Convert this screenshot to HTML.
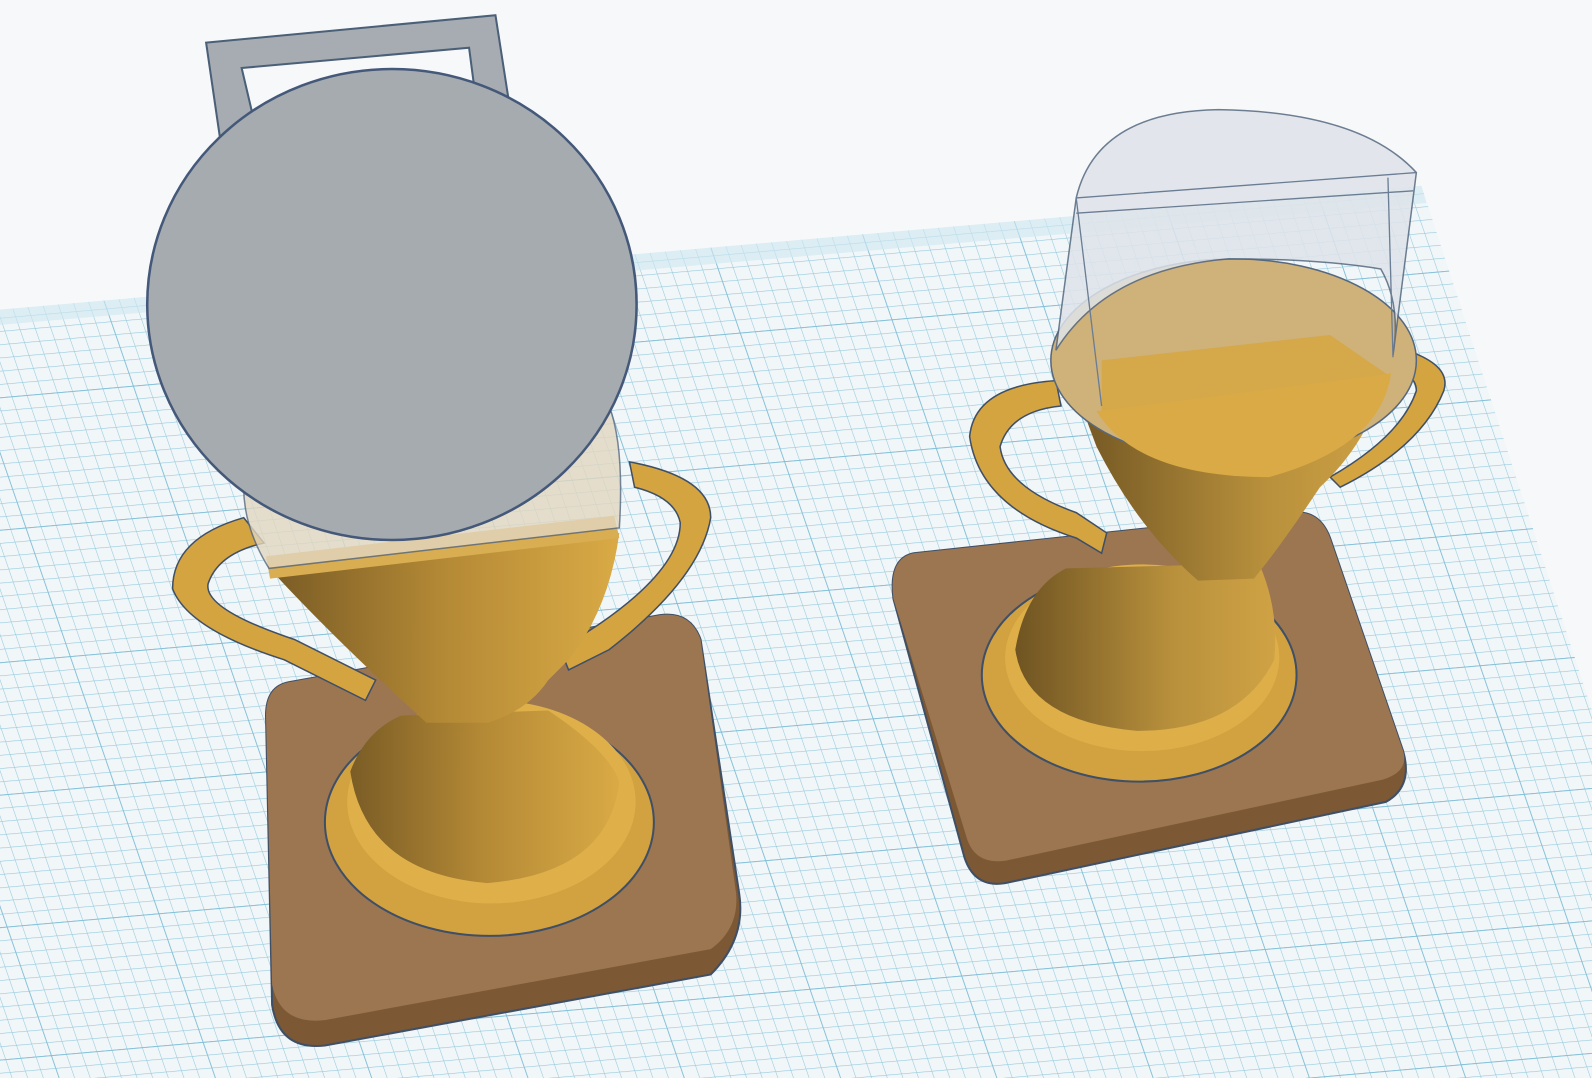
<!DOCTYPE html>
<html><head><style>html,body{margin:0;padding:0;background:#f7f8f9;overflow:hidden}svg{display:block}</style></head>
<body>
<svg width="1592" height="1078" viewBox="0 0 1568 1062" preserveAspectRatio="none" xmlns="http://www.w3.org/2000/svg">
<defs>
<pattern id="g" width="15" height="13" patternUnits="userSpaceOnUse" patternTransform="rotate(-5) skewX(14)">
<rect width="15" height="13" fill="#f1f6f8"/>
<path d="M0 0H15M0 0V13" stroke="#93c9de" stroke-width="1.1"/>
</pattern>
<pattern id="G" width="150" height="130" patternUnits="userSpaceOnUse" patternTransform="rotate(-5) skewX(14)">
<path d="M0 0H150M0 0V130" stroke="#7dbcd6" stroke-width="1.6" fill="none"/>
</pattern>
<linearGradient id="cone" x1="0" x2="1"><stop offset="0" stop-color="#7a5c25"/><stop offset=".5" stop-color="#b58a36"/><stop offset="1" stop-color="#d9aa45"/></linearGradient>
<linearGradient id="cone2" x1="0" x2="1"><stop offset="0" stop-color="#6f5422"/><stop offset=".6" stop-color="#b8903c"/><stop offset="1" stop-color="#cfa244"/></linearGradient>
</defs>
<rect width="1568" height="1062" fill="#f7f8f9"/>
<polygon points="0,305 1400,183 1568,700 1568,1062 0,1062" fill="url(#g)"/>
<polygon points="0,305 1400,183 1568,700 1568,1062 0,1062" fill="url(#G)"/>
<polygon points="0,305 1400,183 1405,200 0,320" fill="#cfe7f1" opacity=".6"/>

<!-- left base -->
<path d="M285,672 L650,606 Q680,602 690,630 L728,880 Q735,925 700,960 L320,1030 Q275,1035 268,990 L262,705 Q262,676 285,672Z" fill="#7c5834" stroke="#3f4f66" stroke-width="2"/>
<path d="M285,672 L650,606 Q680,602 690,630 L725,880 Q728,915 700,935 L320,1005 Q276,1010 268,970 L262,705 Q262,676 285,672Z" fill="#9b7651"/>
<!-- left foot -->
<ellipse cx="482" cy="810" rx="162" ry="112" fill="#d2a241" stroke="#3f4f66" stroke-width="2"/>
<ellipse cx="484" cy="790" rx="142" ry="100" fill="#dfb04a"/>
<path d="M345,760 Q360,720 395,705 L540,700 Q600,740 610,770 Q600,860 480,870 Q360,860 345,760Z" fill="url(#cone)"/>
<!-- handles left -->
<path d="M240,510 Q170,530 170,580 Q185,620 280,650 L360,690 L370,670 L290,630 Q200,600 205,575 Q215,545 260,535Z" fill="#d4a440" stroke="#3f4f66" stroke-width="1.5"/>
<path d="M620,455 Q700,470 700,510 Q690,570 600,640 L560,660 L552,640 L590,615 Q670,560 670,515 Q665,490 625,480Z" fill="#d4a440" stroke="#3f4f66" stroke-width="1.5"/>
<!-- left cup cone -->
<path d="M270,565 L610,525 Q600,600 560,650 L540,670 Q520,700 480,712 L420,712 Q330,630 270,565Z" fill="url(#cone)"/>
<path d="M262,548 L605,508 L610,530 L266,570Z" fill="#d9ad52"/>
<path d="M240,480 Q250,420 360,400 L600,400 Q615,440 610,520 L265,560 Q240,520 240,480Z" fill="#e2d7c0" opacity=".8" stroke="#55687f" stroke-width="1.5"/>
<!-- hanger -->
<path d="M203,42 L488,15 L502,105 L470,108 L462,47 L238,67 L250,118 L218,145Z" fill="#a6acb1" stroke="#4a5f78" stroke-width="2"/>
<!-- disc -->
<ellipse cx="386" cy="300" rx="241" ry="232" fill="#a6abb0" stroke="#44587a" stroke-width="2.5"/>

<!-- right base -->
<path d="M900,545 L1275,505 Q1300,503 1310,530 L1382,740 Q1392,775 1365,790 L990,870 Q960,875 950,845 L880,590 Q875,550 900,545Z" fill="#7c5834" stroke="#3f4f66" stroke-width="2"/>
<path d="M900,545 L1275,505 Q1300,503 1310,530 L1382,740 Q1388,760 1362,768 L990,848 Q960,852 952,825 L880,590 Q875,550 900,545Z" fill="#9b7651"/>
<ellipse cx="1122" cy="665" rx="155" ry="105" fill="#d2a241" stroke="#3f4f66" stroke-width="2"/>
<ellipse cx="1125" cy="648" rx="135" ry="92" fill="#deaf48"/>
<path d="M1000,640 Q1010,580 1050,560 L1240,555 Q1260,600 1255,650 Q1220,720 1120,720 Q1010,710 1000,640Z" fill="url(#cone2)"/>
<!-- right handles -->
<path d="M1040,375 Q960,380 955,430 Q965,500 1060,530 L1085,545 L1090,525 L1060,505 Q990,480 985,440 Q995,405 1045,400Z" fill="#d4a440" stroke="#3f4f66" stroke-width="1.5"/>
<path d="M1385,345 Q1430,360 1422,385 Q1400,440 1320,480 L1310,470 Q1380,430 1395,385 Q1395,370 1375,365Z" fill="#d4a440" stroke="#3f4f66" stroke-width="1.5"/>
<!-- right cup -->
<path d="M1050,360 L1375,320 Q1365,420 1300,480 Q1260,540 1235,570 L1180,572 Q1120,520 1080,440Z" fill="url(#cone2)"/>
<ellipse cx="1215" cy="355" rx="180" ry="100" fill="#cfb17a" stroke="#55687f" stroke-width="1.5"/>
<path d="M1085,355 L1310,330 L1368,370 L1085,405Z" fill="#d5a84a"/>
<path d="M1080,405 L1370,368 Q1360,440 1250,470 Q1120,470 1080,405Z" fill="#d9aa45"/>
<!-- glass -->
<path d="M1040,345 L1060,195 Q1080,110 1200,108 Q1340,110 1395,170 L1372,350 Q1380,300 1360,265 Q1300,255 1210,255 Q1090,265 1040,345Z" fill="#dfe4ea" opacity=".85" stroke="#55687f" stroke-width="1.5"/>
<path d="M1060,195 L1395,170 M1060,210 L1392,188 M1060,195 L1085,400 M1367,175 L1372,352" stroke="#6a7d94" stroke-width="1.3" fill="none"/>
</svg>
</body></html>
